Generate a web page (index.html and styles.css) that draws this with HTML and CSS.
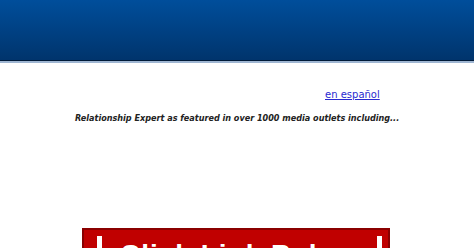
FILE: index.html
```html
<!DOCTYPE html>
<html>
<head>
<meta charset="utf-8">
<link rel="stylesheet" href="styles.css">
</head>
<body>
<div class="header"></div>
<div class="content">
  <div class="lang"><a href="#">en español</a></div>
  <p class="tagline">Relationship Expert as featured in over 1000 media outlets including...</p>
  <div class="cta">
    <span class="bar"></span>
    <span class="cta-text">Click Link Below</span>
    <span class="bar"></span>
  </div>
</div>
</body>
</html>
```
FILE: styles.css
```css
html, body { margin: 0; padding: 0; background: #fff; overflow: hidden; }
body { width: 474px; height: 248px; font-family: "DejaVu Sans", Verdana, sans-serif; }
.header {
  height: 60px;
  background: linear-gradient(#004e9b, #00346c);
  border-bottom: 1px solid #001a38;
  box-shadow: 0 2px 0 #9fb6d2;
}
.content { width: 474px; }
.lang {
  margin-top: 28px;
  padding-left: 325px;
  font-size: 10px;
  line-height: 12px;
  height: 12px;
}
.lang a { color: #2a2ad0; text-decoration: underline; }
.tagline {
  margin: 12px 0 0 75px;
  font-size: 8.1px;
  line-height: 10px;
  font-weight: bold;
  font-style: italic;
  color: #222;
  white-space: nowrap;
}
.cta {
  margin: 105px 0 0 82px;
  width: 308px;
  height: 40px;
  background: #c00000;
  border: 2px solid #8a0000;
  display: flex;
  align-items: flex-start;
  padding: 6px 16px 0 13px;
  box-sizing: border-box;
  gap: 18px;
}
.bar { width: 5px; height: 20px; background: #fff; flex: none; }
.cta-text {
  flex: 1;
  color: #fff;
  font-family: "Liberation Sans", Arial, sans-serif;
  font-weight: bold;
  font-size: 28px;
  line-height: 28px;
  margin-top: 5px;
  letter-spacing: 1px;
  white-space: nowrap;
}
```
